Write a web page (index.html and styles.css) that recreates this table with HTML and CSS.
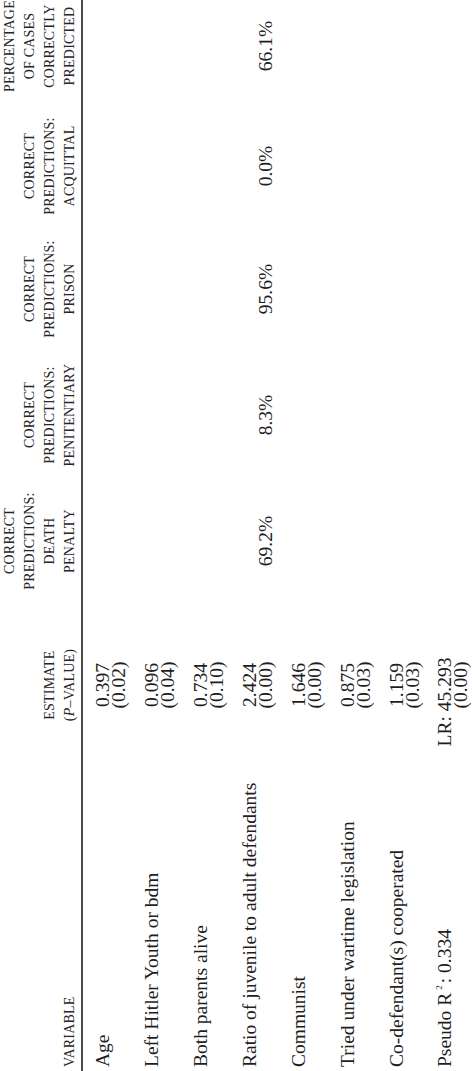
FILE: index.html
```html
<!DOCTYPE html>
<html lang="en">
<head>
<meta charset="utf-8">
<title>Ordered logit estimates</title>
<link rel="stylesheet" href="styles.css">
</head>
<body>
<div class="page">
  <div class="table">
    <div class="thead">
      <div class="th th-var"><span>VARIABLE</span></div>
      <div class="th"><span>ESTIMATE</span><span>(<i>P</i>–VALUE)</span></div>
      <div class="th"><span>CORRECT</span><span>PREDICTIONS:</span><span>DEATH</span><span>PENALTY</span></div>
      <div class="th"><span>CORRECT</span><span>PREDICTIONS:</span><span>PENITENTIARY</span></div>
      <div class="th"><span>CORRECT</span><span>PREDICTIONS:</span><span>PRISON</span></div>
      <div class="th"><span>CORRECT</span><span>PREDICTIONS:</span><span>ACQUITTAL</span></div>
      <div class="th"><span>PERCENTAGE</span><span>OF CASES</span><span>CORRECTLY</span><span>PREDICTED</span></div>
    </div>
    <div class="tbody">
      <div class="row">
        <div class="td td-var">Age</div>
        <div class="td td-num"><span>0.397</span><span>(0.02)</span></div>
      </div>
      <div class="row">
        <div class="td td-var">Left Hitler Youth or bdm</div>
        <div class="td td-num"><span>0.096</span><span>(0.04)</span></div>
      </div>
      <div class="row">
        <div class="td td-var">Both parents alive</div>
        <div class="td td-num"><span>0.734</span><span>(0.10)</span></div>
      </div>
      <div class="row">
        <div class="td td-var">Ratio of juvenile to adult defendants</div>
        <div class="td td-num"><span>2.424</span><span>(0.00)</span></div>
        <div class="td td-pct">69.2%</div>
        <div class="td td-pct">8.3%</div>
        <div class="td td-pct">95.6%</div>
        <div class="td td-pct">0.0%</div>
        <div class="td td-pct">66.1%</div>
      </div>
      <div class="row">
        <div class="td td-var">Communist</div>
        <div class="td td-num"><span>1.646</span><span>(0.00)</span></div>
      </div>
      <div class="row">
        <div class="td td-var">Tried under wartime legislation</div>
        <div class="td td-num"><span>0.875</span><span>(0.03)</span></div>
      </div>
      <div class="row">
        <div class="td td-var">Co-defendant(s) cooperated</div>
        <div class="td td-num"><span>1.159</span><span>(0.03)</span></div>
      </div>
      <div class="row">
        <div class="td td-var">Pseudo R<sup>2</sup>: 0.334</div>
        <div class="td td-num"><span><span class="lr">LR: </span>45.293</span><span>(0.00)</span></div>
      </div>
    </div>
  </div>
</div>
</body>
</html>
```

FILE: styles.css
```css
html, body {
  margin: 0;
  padding: 0;
  overflow: hidden;
  background: #ffffff;
}

body {
  width: 474px;
  height: 1071px;
  font-family: "Liberation Serif", "Times New Roman", serif;
  color: #1e1e1e;
}

.page {
  width: 1071px;
  height: 474px;
  overflow: hidden;
  transform-origin: 0 0;
  transform: translateY(1071px) rotate(-90deg);
  background: #ffffff;
}

.table {
  --cols: 313px 146px 142px 110px 142px 104px 136px;
  width: 1071px;
  overflow: hidden;
}

.thead {
  display: grid;
  grid-template-columns: var(--cols);
  height: 81px;
  border-bottom: 2px solid #4a4a4a;
}

.th {
  display: flex;
  flex-direction: column;
  justify-content: flex-end;
  align-items: center;
  padding-bottom: 4px;
  font-size: 14px;
  line-height: 20px;
  letter-spacing: 0.2px;
  white-space: nowrap;
  color: #262626;
}

.th-var {
  align-items: flex-start;
  padding-left: 4px;
}

.th i {
  font-style: italic;
}

.tbody {
  padding-top: 12.4px;
}

.row {
  display: grid;
  grid-template-columns: var(--cols);
  height: 48.86px;
  font-size: 19.5px;
  line-height: 16px;
}

.td {
  white-space: nowrap;
}

.td-var {
  padding-left: 4px;
}

.td-var sup {
  font-size: 9px;
  line-height: 0;
  vertical-align: 9px;
  margin: 0 2px 0 3px;
}

.td-num {
  display: flex;
  flex-direction: column;
  align-items: center;
}

.lr {
  margin-left: -34px;
}

.td-pct {
  display: flex;
  flex-direction: column;
  align-items: center;
  padding-top: 16px;
}
```
